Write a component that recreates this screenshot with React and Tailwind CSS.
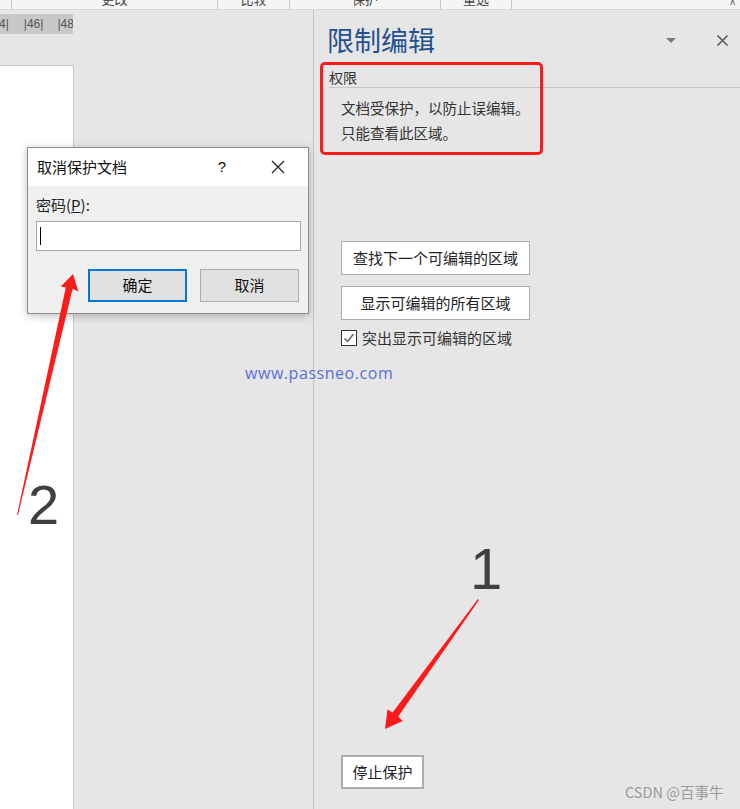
import React from 'react';

const cjk = { fontFamily: '"Noto Sans CJK SC", "Noto Sans", sans-serif' };
const latin = { fontFamily: '"Liberation Sans", Arial, sans-serif' };

// Ribbon strip at the top, mostly scrolled out of view
const RibbonStrip = () => {
  const groups = [
    { w: 'w-[12px]', label: '' },
    { w: 'w-[206px]', label: '更改' },
    { w: 'w-[72px]', label: '比较' },
    { w: 'w-[151px]', label: '保护' },
    { w: 'w-[71px]', label: '重选' },
  ];
  return (
    <div className="h-[10px] bg-[#f5f5f5] border-b border-[#d6d6d6] flex overflow-hidden relative" style={cjk}>
      {groups.map((g, i) => (
        <div key={i} className={`${g.w} h-full border-r border-[#c8c8c8] flex justify-center`}>
          <span className="text-[13px] leading-[13px] -mt-[8px] text-[#444]">{g.label}</span>
        </div>
      ))}
      <span className="absolute right-[4px] -top-[5px] text-[12px] text-[#555]">^</span>
    </div>
  );
};

const Ruler = () => (
  <div className="w-[73px] h-[20px] bg-[#c8c8c8] flex items-center text-[12px] text-[#555] whitespace-nowrap overflow-hidden" style={latin}>
    <span className="-ml-[1px]">4|</span>
    <span className="ml-[15px]">|46|</span>
    <span className="ml-[14px]">|48</span>
  </div>
);

const PanelButton = ({ children, className = '' }) => (
  <button className={`h-[34px] bg-white border border-[#adadad] text-[15px] text-[#222] ${className}`} style={cjk}>
    {children}
  </button>
);

const ProtectPanel = () => (
  <div className="flex-1 flex flex-col pl-[15px] border-l border-[#c4c4c4]" style={cjk}>
    <div className="mt-[12px] h-[36px] flex items-center">
      <h1 className="-ml-[2px] text-[27px] leading-[36px] text-[#24518e] font-normal">限制编辑</h1>
      <div className="ml-auto flex items-center">
        <svg width="12" height="7" viewBox="0 0 12 7" className="mr-[39px]">
          <polygon points="1,1 11,1 6,6" fill="#7a7a7a" />
        </svg>
        <svg width="13" height="13" viewBox="0 0 13 13" className="mr-[11px]">
          <path d="M1.5 1.5 L11.5 11.5 M11.5 1.5 L1.5 11.5" stroke="#5a5a5a" strokeWidth="1.6" />
        </svg>
      </div>
    </div>

    <div className="mt-[9px] h-[21px] border-b border-[#c6c6c6] text-[14px] leading-[20px] text-[#333]">权限</div>

    <div className="mt-[7px] pl-[12px] text-[14.5px] leading-[25px] text-[#333]">
      <p>文档受保护，以防止误编辑。</p>
      <p>只能查看此区域。</p>
    </div>

    <div className="mt-[96px] pl-[12px] flex flex-col items-start">
      <PanelButton className="w-[189px]">查找下一个可编辑的区域</PanelButton>
      <PanelButton className="w-[189px] mt-[11px]">显示可编辑的所有区域</PanelButton>
      <label className="mt-[8px] h-[20px] flex items-center text-[15px] text-[#333]">
        <span className="w-[16px] h-[16px] border border-[#333] bg-white flex items-center justify-center">
          <svg width="12" height="12" viewBox="0 0 12 12">
            <path d="M1.5 6.5 L4.5 9.5 L10.5 2" fill="none" stroke="#666" strokeWidth="1.5" />
          </svg>
        </span>
        <span className="ml-[5px]">突出显示可编辑的区域</span>
      </label>
    </div>

    <div className="mt-auto mb-[20px] pl-[12px]">
      <button className="w-[83px] h-[34px] bg-white border-2 border-[#adadad] text-[15px] text-[#222]" style={cjk}>停止保护</button>
    </div>
  </div>
);

const UnprotectDialog = () => (
  <div className="absolute left-[27px] top-[147px] w-[282px] h-[167px] border border-[#8c8c8c] bg-[#f0f0f0] shadow-[0_2px_8px_rgba(0,0,0,0.25)] flex flex-col" style={cjk}>
    <div className="h-[38px] bg-white flex items-center pl-[9px] text-[15px] text-[#111]">
      <span>取消保护文档</span>
      <span className="ml-auto mr-[45px] text-[15px]" style={latin}>?</span>
      <svg width="14" height="14" viewBox="0 0 14 14" className="mr-[23px]">
        <path d="M1 1 L13 13 M13 1 L1 13" stroke="#222" strokeWidth="1.2" />
      </svg>
    </div>
    <div className="px-[8px] flex flex-col">
      <div className="mt-[9px] text-[15px] leading-[20px] text-[#222]">
        密码(<span className="underline">P</span>):
      </div>
      <div className="mt-[6px] h-[30px] w-[265px] bg-white border border-[#a8a8a8] flex items-center pl-[3px]">
        <span className="w-[1px] h-[18px] bg-black" />
      </div>
      <div className="mt-[18px] flex justify-end gap-[13px] pr-[1px]">
        <button className="w-[99px] h-[33px] bg-[#e1e1e1] border-2 border-[#0078d7] text-[15px] text-[#111]" style={cjk}>确定</button>
        <button className="w-[99px] h-[33px] bg-[#e1e1e1] border border-[#adadad] text-[15px] text-[#111]" style={cjk}>取消</button>
      </div>
    </div>
  </div>
);

// Red callouts drawn over the window
const Annotations = () => (
  <>
    <div className="absolute left-[320px] top-[62px] w-[223px] h-[93px] border-[3px] border-[#ff1a1a] rounded-[5px]" />
    <svg className="absolute left-0 top-0 pointer-events-none" width="740" height="809" viewBox="0 0 740 809">
      {/* arrow 1: down-left to the stop button */}
      <polygon points="478,599 479,600 398.2,716.4 402.7,721 385,729 387.5,709.5 392.6,712.4" fill="#ff1a1a" />
      {/* arrow 2: up to the dialog */}
      <polygon points="17,515 18,515 72.6,288.8 78.4,291.5 73,274 60.8,286.6 65.8,287.4" fill="#ff1a1a" />
    </svg>
    <div className="absolute left-[470px] top-[540px] text-[58px] leading-none text-[#404040]" style={latin}>1</div>
    <div className="absolute left-[28px] top-[477px] text-[56px] leading-none text-[#404040]" style={latin}>2</div>
    <div className="absolute left-[245px] top-[362px] text-[16px] leading-[22px] text-[#5a6ee0] tracking-[0.55px]" style={{ fontFamily: '"Open Sans", "Noto Sans", sans-serif' }}>
      www.passneo.com
    </div>
    <div className="absolute left-[625px] top-[782px] text-[14.5px] leading-[20px] text-[#9a9a9a]" style={cjk}>
      CSDN @百事牛
    </div>
  </>
);

const App = () => (
  <div className="relative w-[740px] h-[809px] overflow-hidden bg-[#e6e6e6] flex flex-col">
    <RibbonStrip />
    <div className="flex-1 flex">
      <div className="w-[313px] flex flex-col pt-[4px]">
        <Ruler />
        <div className="mt-[31px] flex-1 w-[74px] bg-white border-t border-r border-[#c6c6c6]" />
      </div>
      <ProtectPanel />
    </div>
    <UnprotectDialog />
    <Annotations />
  </div>
);

export default App;
